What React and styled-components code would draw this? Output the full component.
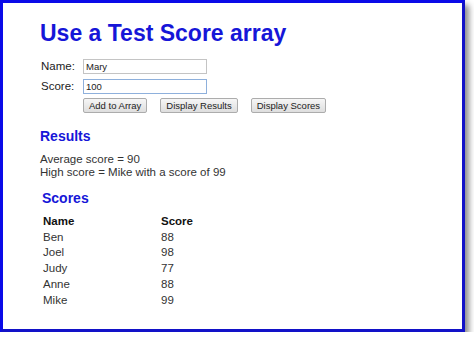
import React from 'react'
import styled, { createGlobalStyle } from 'styled-components'

const GlobalStyle = createGlobalStyle`
  html, body {
    margin: 0;
    padding: 0;
    background: #fff;
  }
  body {
    font-family: "Liberation Sans", Arial, sans-serif;
  }
`

const Frame = styled.div`
  box-sizing: border-box;
  width: 465px;
  height: 332px;
  border: 3px solid #0a0ae8;
  border-right-color: #1212c8;
  border-bottom-color: #1212c8;
  box-shadow: 4px 5px 6px rgba(0, 0, 0, 0.45);
  padding: 17px 0 0 37px;
  background: #fff;
  color: #333;
`

const Title = styled.h1`
  margin: 0;
  font-size: 23px;
  line-height: 26px;
  font-weight: bold;
  color: #1616d8;
`

const Form = styled.div`
  display: grid;
  grid-template-columns: 43px auto;
  row-gap: 5px;
  margin-top: 13px;
  align-items: center;
`

const Label = styled.label`
  font-size: 11.5px;
  line-height: 15px;
  color: #222;
  padding-left: 1px;
`

const Input = styled.input`
  box-sizing: border-box;
  width: 124px;
  height: 15px;
  margin: 0;
  padding: 0 2px;
  font-family: inherit;
  font-size: 9.5px;
  color: #222;
  border: 1px solid ${({ focused }) => (focused ? '#8eb0dc' : '#c4c4c4')};
  background: #fff;
  outline: none;
`

const Buttons = styled.div`
  grid-column: 2;
  display: flex;
  gap: 13px;
  margin-top: -1px;
`

const Button = styled.button`
  box-sizing: border-box;
  height: 15px;
  margin: 0;
  padding: 0 5px;
  font-family: inherit;
  font-size: 9.5px;
  line-height: 13px;
  color: #222;
  border: 1px solid #acacac;
  border-radius: 2px;
  background: linear-gradient(#f6f6f6, #dedede);
`

const Heading = styled.h2`
  margin: ${({ top }) => top}px 0 0 ${({ indent }) => indent || 0}px;
  font-size: 14px;
  line-height: 17px;
  font-weight: bold;
  color: #1616d8;
`

const Output = styled.p`
  margin: 8px 0 0;
  font-size: 11.5px;
  line-height: 12.5px;
  color: #333;
`

const Table = styled.div`
  display: grid;
  grid-template-columns: 118px auto;
  margin: 7px 0 0 3px;
  font-size: 11.5px;
  line-height: 15.7px;
  color: #333;
`

const Cell = styled.div`
  font-weight: ${({ head }) => (head ? 'bold' : 'normal')};
  color: ${({ head }) => (head ? '#111' : '#333')};
`

const scores = [
  ['Ben', 88],
  ['Joel', 98],
  ['Judy', 77],
  ['Anne', 88],
  ['Mike', 99],
]

export default function App() {
  return (
    <>
      <GlobalStyle />
      <Frame>
        <Title>Use a Test Score array</Title>
        <Form>
          <Label>Name:</Label>
          <Input defaultValue="Mary" />
          <Label>Score:</Label>
          <Input defaultValue="100" focused />
          <Buttons>
            <Button>Add to Array</Button>
            <Button>Display Results</Button>
            <Button>Display Scores</Button>
          </Buttons>
        </Form>
        <Heading top={15}>Results</Heading>
        <Output>
          Average score = 90
          <br />
          High score = Mike with a score of 99
        </Output>
        <Heading top={12} indent={2}>Scores</Heading>
        <Table>
          <Cell head>Name</Cell>
          <Cell head>Score</Cell>
          {scores.map(([name, score]) => (
            <React.Fragment key={name}>
              <Cell>{name}</Cell>
              <Cell>{score}</Cell>
            </React.Fragment>
          ))}
        </Table>
      </Frame>
    </>
  )
}
